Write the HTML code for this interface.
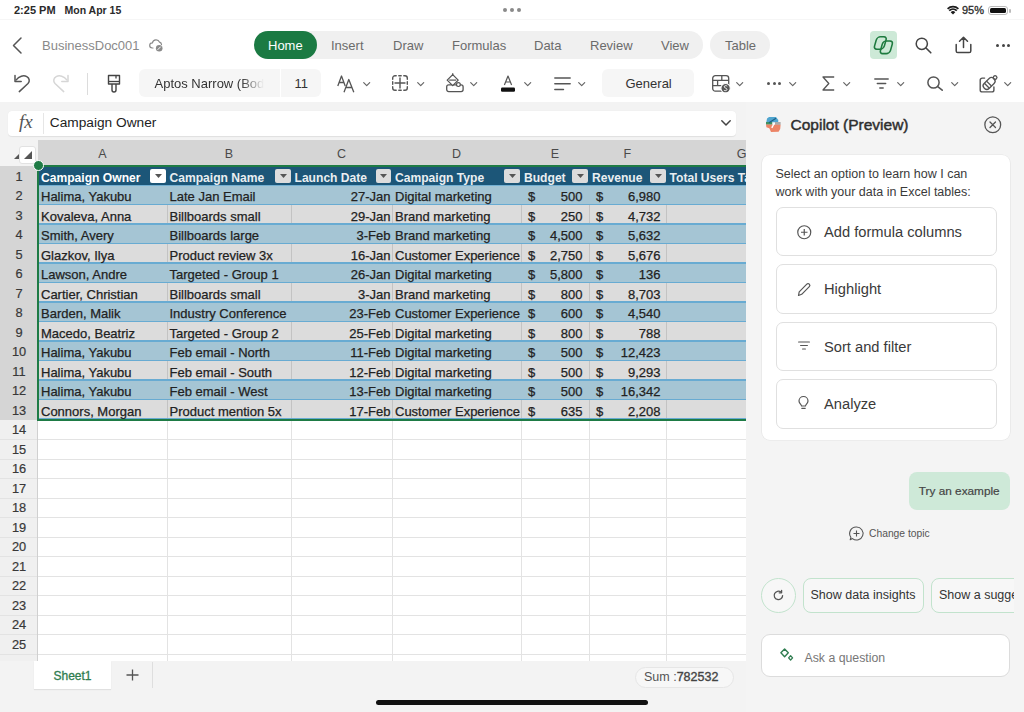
<!DOCTYPE html>
<html><head><meta charset="utf-8">
<style>
*{margin:0;padding:0;box-sizing:border-box}
html,body{width:1024px;height:712px;overflow:hidden;background:#fff;font-family:"Liberation Sans",sans-serif;color:#222}
.a{position:absolute}
.t{position:absolute;white-space:nowrap;line-height:1}
svg.i{position:absolute;overflow:visible}
.chev{position:absolute;width:7px;height:4px}
</style></head><body>

<div class="t" style="left:14px;top:5px;font-size:11px;font-weight:700;color:#2a2a2a;">2:25 PM</div>
<div class="t" style="left:64.5px;top:5.3px;font-size:10.5px;font-weight:700;color:#2a2a2a;">Mon Apr 15</div>
<div class="a" style="left:503px;top:8px;width:4px;height:4px;background:#8a8a8a;border-radius:2px"></div>
<div class="a" style="left:510px;top:8px;width:4px;height:4px;background:#8a8a8a;border-radius:2px"></div>
<div class="a" style="left:517px;top:8px;width:4px;height:4px;background:#8a8a8a;border-radius:2px"></div>
<svg class="i" style="left:947px;top:6px" width="12" height="9" viewBox="0 0 12 9"><path d="M6 8.6 L8.3 6.2 A3.3 3.3 0 0 0 3.7 6.2 Z" fill="#1c1c1c"/><path d="M2.2 4.6 A5.5 5.5 0 0 1 9.8 4.6" fill="none" stroke="#1c1c1c" stroke-width="1.7"/><path d="M0.6 2.8 A7.8 7.8 0 0 1 11.4 2.8" fill="none" stroke="#1c1c1c" stroke-width="1.7"/></svg>
<div class="t" style="left:962px;top:5px;font-size:11px;font-weight:400;color:#2a2a2a;-webkit-text-stroke:0.3px #2a2a2a">95%</div>
<div class="a" style="left:988px;top:6px;width:20px;height:9px;border:1px solid #bbb;border-radius:3px;padding:1px"><div style="width:100%;height:100%;background:#111;border-radius:1.5px"></div></div>
<div class="a" style="left:1009px;top:9px;width:1.5px;height:3.5px;background:#bbb;border-radius:1px"></div>
<div class="a" style="left:0px;top:19px;width:1024px;height:1px;background:#f6f6f6;"></div>
<svg class="i" style="left:12px;top:37px" width="10" height="17" viewBox="0 0 10 17"><path d="M9 1 L1.5 8.5 L9 16" fill="none" stroke="#555" stroke-width="1.5" stroke-linecap="round" stroke-linejoin="round"/></svg>
<div class="t" style="left:42px;top:39px;font-size:13px;font-weight:400;color:#8a8a8a;">BusinessDoc001</div>
<svg class="i" style="left:149px;top:38px" width="15" height="14" viewBox="0 0 15 14"><path d="M4 10 H3.2 A2.6 2.6 0 0 1 3.4 4.8 A3.8 3.8 0 0 1 10.6 4.2 A2.6 2.6 0 0 1 12.5 6.5" fill="none" stroke="#8a8a8a" stroke-width="1.2" stroke-linecap="round"/><circle cx="10.2" cy="10.2" r="3.3" fill="#8a8a8a"/><path d="M8.6 11.8 L11.8 8.6" stroke="#fff" stroke-width="1"/></svg>
<div class="a" style="left:254px;top:31px;width:449px;height:28px;background:#f0f0f0;border-radius:14px"></div>
<div class="a" style="left:254px;top:31px;width:63px;height:28px;background:#1b7a43;border-radius:14px"></div>
<div class="a" style="left:710px;top:31px;width:60px;height:28px;background:#f0f0f0;border-radius:14px"></div>
<div class="t" style="left:268px;top:39px;font-size:13px;font-weight:400;color:#ffffff;">Home</div>
<div class="t" style="left:331px;top:39px;font-size:13px;font-weight:400;color:#6b6b6b;">Insert</div>
<div class="t" style="left:393px;top:39px;font-size:13px;font-weight:400;color:#6b6b6b;">Draw</div>
<div class="t" style="left:452px;top:39px;font-size:13px;font-weight:400;color:#6b6b6b;">Formulas</div>
<div class="t" style="left:534px;top:39px;font-size:13px;font-weight:400;color:#6b6b6b;">Data</div>
<div class="t" style="left:590px;top:39px;font-size:13px;font-weight:400;color:#6b6b6b;">Review</div>
<div class="t" style="left:661px;top:39px;font-size:13px;font-weight:400;color:#6b6b6b;">View</div>
<div class="t" style="left:725px;top:39px;font-size:13px;font-weight:400;color:#6b6b6b;">Table</div>
<div class="a" style="left:869.8px;top:31.1px;width:27px;height:27.5px;background:#cde9d7;border-radius:4px"></div>
<svg class="i" style="left:873.6px;top:35.8px" width="20" height="19" viewBox="0 0 20 19"><g fill="none" stroke="#1d7a3e" stroke-width="1.6" transform="skewX(-16)"><rect x="3.4" y="0.8" width="9.8" height="12.4" rx="3.2"/><rect x="10.6" y="5" width="10" height="12.6" rx="3.2"/></g></svg>
<svg class="i" style="left:915px;top:37px" width="17" height="17" viewBox="0 0 17 17"><circle cx="6.8" cy="6.8" r="5.6" fill="none" stroke="#444" stroke-width="1.5"/><path d="M11 11 L15.8 15.8" stroke="#444" stroke-width="1.6" stroke-linecap="round"/></svg>
<svg class="i" style="left:955px;top:36px" width="17" height="18" viewBox="0 0 17 18"><path d="M8.5 11.5 V1.5 M4.5 5.2 L8.5 1.2 L12.5 5.2" fill="none" stroke="#444" stroke-width="1.5" stroke-linecap="round" stroke-linejoin="round"/><path d="M1.2 8.5 V15 A1.6 1.6 0 0 0 2.8 16.6 H14.2 A1.6 1.6 0 0 0 15.8 15 V8.5" fill="none" stroke="#444" stroke-width="1.5" stroke-linecap="round"/></svg>
<div class="a" style="left:996.0px;top:43.5px;width:3px;height:3px;background:#444;border-radius:50%"></div>
<div class="a" style="left:1001.5px;top:43.5px;width:3px;height:3px;background:#444;border-radius:50%"></div>
<div class="a" style="left:1007.0px;top:43.5px;width:3px;height:3px;background:#444;border-radius:50%"></div>
<svg class="i" style="left:13px;top:74px" width="18" height="19" viewBox="0 0 18 19"><path d="M3.2 5.9 C6 2.2 10.5 0.9 13.8 2.6 C16.6 4.2 17 7.3 15 9.5 L6.3 17.6" fill="none" stroke="#555" stroke-width="1.5" stroke-linecap="round" stroke-linejoin="round"/><path d="M2 1.6 V7.6 H8.2" fill="none" stroke="#555" stroke-width="1.5" stroke-linecap="round" stroke-linejoin="round"/></svg>
<svg class="i" style="left:52px;top:74px" width="18" height="19" viewBox="0 0 18 19"><g transform="translate(18 0) scale(-1 1)"><path d="M3.2 5.9 C6 2.2 10.5 0.9 13.8 2.6 C16.6 4.2 17 7.3 15 9.5 L6.3 17.6" fill="none" stroke="#d6d6d6" stroke-width="1.5" stroke-linecap="round" stroke-linejoin="round"/><path d="M2 1.6 V7.6 H8.2" fill="none" stroke="#d6d6d6" stroke-width="1.5" stroke-linecap="round" stroke-linejoin="round"/></g></svg>
<div class="a" style="left:87px;top:72.5px;width:1px;height:22px;background:#dcdcdc;"></div>
<svg class="i" style="left:107px;top:74px" width="14" height="18" viewBox="0 0 14 18"><path d="M1.5 1.5 H12.5 V10 H1.5 Z" fill="none" stroke="#444" stroke-width="1.4" stroke-linejoin="round"/><path d="M1.5 7.5 H12.5" stroke="#444" stroke-width="1.3"/><path d="M9 1.5 V4.5" stroke="#444" stroke-width="1.3"/><path d="M5 10 V16 A2 2 0 0 0 9 16 V10" fill="none" stroke="#444" stroke-width="1.4"/></svg>
<div class="a" style="left:139px;top:69px;width:141px;height:28px;background:#f6f6f6;border-radius:6px 0 0 6px"></div>
<div class="a" style="left:281px;top:69px;width:40px;height:28px;background:#f6f6f6;border-radius:0 6px 6px 0"></div>
<div class="a" style="left:150px;top:69px;width:114px;height:28px;overflow:hidden;-webkit-mask-image:linear-gradient(to right,#000 80%,transparent 100%)"><div class="t" style="left:4.5px;top:7.5px;font-size:13px;color:#333">Aptos Narrow (Body)</div></div>
<div class="t" style="left:294.5px;top:76.5px;font-size:13px;font-weight:400;color:#333;">11</div>
<svg class="i" style="left:337px;top:74.5px" width="20" height="18" viewBox="0 0 20 18"><g fill="none" stroke="#555" stroke-width="1.3" stroke-linejoin="round"><path d="M0.8 11 L4.5 1 L8.2 11 M2.2 7.5 H6.8"/><path d="M7 17.3 L11.8 4.5 L16.8 17.3 M8.8 12.5 H14.8"/></g></svg>
<svg class="i" style="left:362.8px;top:81.5px" width="8" height="5" viewBox="0 0 8 5"><path d="M0.7 0.7 L3.7 3.7 L6.7 0.7" fill="none" stroke="#666" stroke-width="1.2" stroke-linecap="round" stroke-linejoin="round"/></svg>
<svg class="i" style="left:392.3px;top:75.3px" width="16" height="16" viewBox="0 0 16 16"><g fill="none" stroke="#555" stroke-width="1.4" stroke-linecap="round"><path d="M0.7 4.2 V3 A2.3 2.3 0 0 1 3 0.7 H4.2 M11.8 0.7 H13 A2.3 2.3 0 0 1 15.3 3 V4.2 M15.3 11.8 V13 A2.3 2.3 0 0 1 13 15.3 H11.8 M4.2 15.3 H3 A2.3 2.3 0 0 1 0.7 13 V11.8 M6.8 0.7 H9.2 M6.8 15.3 H9.2 M0.7 6.8 V9.2 M15.3 6.8 V9.2"/><path d="M8 3 V13 M3 8 H13"/></g></svg>
<svg class="i" style="left:416.8px;top:81.5px" width="8" height="5" viewBox="0 0 8 5"><path d="M0.7 0.7 L3.7 3.7 L6.7 0.7" fill="none" stroke="#666" stroke-width="1.2" stroke-linecap="round" stroke-linejoin="round"/></svg>
<svg class="i" style="left:445.5px;top:73px" width="18" height="19" viewBox="0 0 18 19"><rect x="0.7" y="11.8" width="16.4" height="6.8" rx="2" fill="none" stroke="#555" stroke-width="1.3"/><path d="M6.7 1.6 L12.2 7.1 L6.7 12.6 L1.2 7.1 Z" fill="#fff" stroke="#555" stroke-width="1.3" stroke-linejoin="round"/><path d="M3.2 7.1 H10.2" stroke="#555" stroke-width="1.2"/><path d="M6.7 0.2 V3" stroke="#555" stroke-width="1.3"/><circle cx="12.4" cy="11.6" r="1.9" fill="#fff" stroke="#555" stroke-width="1.2"/></svg>
<svg class="i" style="left:469.8px;top:81.5px" width="8" height="5" viewBox="0 0 8 5"><path d="M0.7 0.7 L3.7 3.7 L6.7 0.7" fill="none" stroke="#666" stroke-width="1.2" stroke-linecap="round" stroke-linejoin="round"/></svg>
<svg class="i" style="left:501px;top:74.5px" width="14" height="17" viewBox="0 0 14 17"><path d="M3.4 10 L7 1 L10.6 10 M4.6 7 H9.4" fill="none" stroke="#555" stroke-width="1.2" stroke-linejoin="round"/><rect x="0" y="12.6" width="14" height="4.2" rx="1.2" fill="#111"/></svg>
<svg class="i" style="left:523.8px;top:81.5px" width="8" height="5" viewBox="0 0 8 5"><path d="M0.7 0.7 L3.7 3.7 L6.7 0.7" fill="none" stroke="#666" stroke-width="1.2" stroke-linecap="round" stroke-linejoin="round"/></svg>
<svg class="i" style="left:553.5px;top:76.5px" width="17" height="14" viewBox="0 0 17 14"><path d="M0.8 1 H16.2 M0.8 6.8 H16.2 M0.8 12.5 H9.5" fill="none" stroke="#555" stroke-width="1.4" stroke-linecap="round"/></svg>
<svg class="i" style="left:577.8px;top:81.5px" width="8" height="5" viewBox="0 0 8 5"><path d="M0.7 0.7 L3.7 3.7 L6.7 0.7" fill="none" stroke="#666" stroke-width="1.2" stroke-linecap="round" stroke-linejoin="round"/></svg>
<div class="a" style="left:602px;top:69px;width:92px;height:28px;background:#f6f6f6;border-radius:6px"></div>
<div class="t" style="left:625.5px;top:76.5px;font-size:13px;font-weight:400;color:#333;">General</div>
<svg class="i" style="left:711.5px;top:75px" width="20" height="19" viewBox="0 0 20 19"><g fill="none" stroke="#555" stroke-width="1.3"><rect x="0.7" y="0.7" width="16" height="15.4" rx="2.6"/><path d="M0.7 5.3 H16.7 M0.7 10.6 H11 M9.8 0.7 V5.3 M5.6 5.3 V10.6"/></g><circle cx="13.6" cy="13.2" r="4.7" fill="#555" stroke="#fff" stroke-width="1.1"/><path d="M15.2 11.2 C14.2 10.2 12 10.6 12.2 12 C12.4 13.2 15 13 15 14.4 C15 15.8 12.8 16 11.9 15.2" fill="none" stroke="#fff" stroke-width="0.9"/></svg>
<svg class="i" style="left:735.8px;top:81.5px" width="8" height="5" viewBox="0 0 8 5"><path d="M0.7 0.7 L3.7 3.7 L6.7 0.7" fill="none" stroke="#666" stroke-width="1.2" stroke-linecap="round" stroke-linejoin="round"/></svg>
<div class="a" style="left:767.0px;top:81.5px;width:3px;height:3px;background:#555;border-radius:50%"></div>
<div class="a" style="left:772.5px;top:81.5px;width:3px;height:3px;background:#555;border-radius:50%"></div>
<div class="a" style="left:778.0px;top:81.5px;width:3px;height:3px;background:#555;border-radius:50%"></div>
<svg class="i" style="left:788.8px;top:81.5px" width="8" height="5" viewBox="0 0 8 5"><path d="M0.7 0.7 L3.7 3.7 L6.7 0.7" fill="none" stroke="#666" stroke-width="1.2" stroke-linecap="round" stroke-linejoin="round"/></svg>
<svg class="i" style="left:821.5px;top:76px" width="13" height="15" viewBox="0 0 13 15"><path d="M12.2 1 H1 L6.8 7.5 L1 14 H12.2" fill="none" stroke="#555" stroke-width="1.3" stroke-linejoin="round"/></svg>
<svg class="i" style="left:842.8px;top:81.5px" width="8" height="5" viewBox="0 0 8 5"><path d="M0.7 0.7 L3.7 3.7 L6.7 0.7" fill="none" stroke="#666" stroke-width="1.2" stroke-linecap="round" stroke-linejoin="round"/></svg>
<svg class="i" style="left:873.5px;top:77.5px" width="15" height="11" viewBox="0 0 15 11"><path d="M0.8 1 H14.2 M3.3 5.5 H11.7 M5.8 10 H9.2" fill="none" stroke="#555" stroke-width="1.4" stroke-linecap="round"/></svg>
<svg class="i" style="left:896.8px;top:81.5px" width="8" height="5" viewBox="0 0 8 5"><path d="M0.7 0.7 L3.7 3.7 L6.7 0.7" fill="none" stroke="#666" stroke-width="1.2" stroke-linecap="round" stroke-linejoin="round"/></svg>
<svg class="i" style="left:926.5px;top:76px" width="17" height="15" viewBox="0 0 17 15"><circle cx="6.5" cy="6.5" r="5.6" fill="none" stroke="#555" stroke-width="1.5"/><path d="M10.7 10.7 L15.2 14.2" stroke="#555" stroke-width="1.6" stroke-linecap="round"/></svg>
<svg class="i" style="left:950.8px;top:81.5px" width="8" height="5" viewBox="0 0 8 5"><path d="M0.7 0.7 L3.7 3.7 L6.7 0.7" fill="none" stroke="#666" stroke-width="1.2" stroke-linecap="round" stroke-linejoin="round"/></svg>
<svg class="i" style="left:979px;top:74px" width="20" height="19" viewBox="0 0 20 19"><path d="M5.6 4.1 H3.2 A2 2 0 0 0 1.2 6.1 V15.9 A2 2 0 0 0 3.2 17.9 H12.9 A2 2 0 0 0 14.9 15.9 V13" fill="none" stroke="#555" stroke-width="1.4" stroke-linecap="round"/><g transform="rotate(-45 11 8.6)" fill="none" stroke="#555" stroke-width="1.3"><rect x="3" y="5.1" width="13.5" height="7" rx="3.2"/><path d="M6.6 5.1 V12.1 M9.6 5.1 V12.1"/><circle cx="18.2" cy="8.6" r="1.8"/></g></svg>
<svg class="i" style="left:1004.3px;top:81.5px" width="8" height="5" viewBox="0 0 8 5"><path d="M0.7 0.7 L3.7 3.7 L6.7 0.7" fill="none" stroke="#666" stroke-width="1.2" stroke-linecap="round" stroke-linejoin="round"/></svg>
<div class="a" style="left:0px;top:101.5px;width:1024px;height:1px;background:#e6e6e6;"></div>
<div class="a" style="left:0px;top:102px;width:1024px;height:610px;background:#f3f3f3;"></div>
<div class="a" style="left:8px;top:111px;width:728px;height:25px;background:#ffffff;border-radius:4px;box-shadow:0 0.5px 1px rgba(0,0,0,0.08)"></div>
<div class="a" style="left:43px;top:113px;width:1px;height:21px;background:#e6e6e6;"></div>
<div class="t" style="left:19px;top:111.5px;font-size:19px;font-weight:400;color:#555;font-family:'Liberation Serif',serif"><i>fx</i></div>
<div class="t" style="left:49.8px;top:115.8px;font-size:13.7px;font-weight:400;color:#222;">Campaign Owner</div>
<svg class="i" style="left:720.5px;top:119.5px" width="10" height="6" viewBox="0 0 10 6"><path d="M0.8 0.8 L5 5 L9.2 0.8" fill="none" stroke="#444" stroke-width="1.5" stroke-linecap="round" stroke-linejoin="round"/></svg>
<div class="a" style="left:38px;top:140px;width:708.3px;height:26px;background:#d5d5d5;"></div>
<div class="t" style="left:82.3px;width:40px;text-align:center;top:148px;font-size:12.5px;color:#4a4a4a">A</div>
<div class="t" style="left:208.95px;width:40px;text-align:center;top:148px;font-size:12.5px;color:#4a4a4a">B</div>
<div class="t" style="left:321.55px;width:40px;text-align:center;top:148px;font-size:12.5px;color:#4a4a4a">C</div>
<div class="t" style="left:436.45000000000005px;width:40px;text-align:center;top:148px;font-size:12.5px;color:#4a4a4a">D</div>
<div class="t" style="left:534.95px;width:40px;text-align:center;top:148px;font-size:12.5px;color:#4a4a4a">E</div>
<div class="t" style="left:607.4px;width:40px;text-align:center;top:148px;font-size:12.5px;color:#4a4a4a">F</div>
<div class="t" style="left:721.5px;width:40px;text-align:center;top:148px;font-size:12.5px;color:#4a4a4a">G</div>
<div class="a" style="left:0px;top:166px;width:38px;height:495px;background:#f0f0f0;"></div>
<div class="a" style="left:0px;top:166px;width:38px;height:253.5px;background:#d5d5d5;"></div>
<div class="a" style="left:38px;top:419.5px;width:708.3px;height:241.5px;background:#ffffff;"></div>
<div class="a" style="left:0px;top:439.4px;width:746.3px;height:1px;background:#e3e3e3;"></div>
<div class="a" style="left:0px;top:458.9px;width:746.3px;height:1px;background:#e3e3e3;"></div>
<div class="a" style="left:0px;top:478.4px;width:746.3px;height:1px;background:#e3e3e3;"></div>
<div class="a" style="left:0px;top:497.9px;width:746.3px;height:1px;background:#e3e3e3;"></div>
<div class="a" style="left:0px;top:517.4px;width:746.3px;height:1px;background:#e3e3e3;"></div>
<div class="a" style="left:0px;top:536.9px;width:746.3px;height:1px;background:#e3e3e3;"></div>
<div class="a" style="left:0px;top:556.4px;width:746.3px;height:1px;background:#e3e3e3;"></div>
<div class="a" style="left:0px;top:575.9px;width:746.3px;height:1px;background:#e3e3e3;"></div>
<div class="a" style="left:0px;top:595.4px;width:746.3px;height:1px;background:#e3e3e3;"></div>
<div class="a" style="left:0px;top:614.9px;width:746.3px;height:1px;background:#e3e3e3;"></div>
<div class="a" style="left:0px;top:634.4px;width:746.3px;height:1px;background:#e3e3e3;"></div>
<div class="a" style="left:0px;top:653.9px;width:746.3px;height:1px;background:#e3e3e3;"></div>
<div class="a" style="left:166.6px;top:419.5px;width:1px;height:241.5px;background:#e3e3e3;"></div>
<div class="a" style="left:291.3px;top:419.5px;width:1px;height:241.5px;background:#e3e3e3;"></div>
<div class="a" style="left:391.8px;top:419.5px;width:1px;height:241.5px;background:#e3e3e3;"></div>
<div class="a" style="left:521.1px;top:419.5px;width:1px;height:241.5px;background:#e3e3e3;"></div>
<div class="a" style="left:588.8px;top:419.5px;width:1px;height:241.5px;background:#e3e3e3;"></div>
<div class="a" style="left:666px;top:419.5px;width:1px;height:241.5px;background:#e3e3e3;"></div>
<div class="a" style="left:37px;top:166px;width:1px;height:495px;background:#d0d0d0;"></div>
<div class="t" style="left:0;width:38px;text-align:center;top:170.9px;font-size:12.8px;color:#383838;-webkit-text-stroke:0.2px #383838">1</div>
<div class="t" style="left:0;width:38px;text-align:center;top:190.4px;font-size:12.8px;color:#383838;-webkit-text-stroke:0.2px #383838">2</div>
<div class="t" style="left:0;width:38px;text-align:center;top:209.9px;font-size:12.8px;color:#383838;-webkit-text-stroke:0.2px #383838">3</div>
<div class="t" style="left:0;width:38px;text-align:center;top:229.4px;font-size:12.8px;color:#383838;-webkit-text-stroke:0.2px #383838">4</div>
<div class="t" style="left:0;width:38px;text-align:center;top:248.9px;font-size:12.8px;color:#383838;-webkit-text-stroke:0.2px #383838">5</div>
<div class="t" style="left:0;width:38px;text-align:center;top:268.4px;font-size:12.8px;color:#383838;-webkit-text-stroke:0.2px #383838">6</div>
<div class="t" style="left:0;width:38px;text-align:center;top:287.9px;font-size:12.8px;color:#383838;-webkit-text-stroke:0.2px #383838">7</div>
<div class="t" style="left:0;width:38px;text-align:center;top:307.4px;font-size:12.8px;color:#383838;-webkit-text-stroke:0.2px #383838">8</div>
<div class="t" style="left:0;width:38px;text-align:center;top:326.9px;font-size:12.8px;color:#383838;-webkit-text-stroke:0.2px #383838">9</div>
<div class="t" style="left:0;width:38px;text-align:center;top:346.4px;font-size:12.8px;color:#383838;-webkit-text-stroke:0.2px #383838">10</div>
<div class="t" style="left:0;width:38px;text-align:center;top:365.9px;font-size:12.8px;color:#383838;-webkit-text-stroke:0.2px #383838">11</div>
<div class="t" style="left:0;width:38px;text-align:center;top:385.4px;font-size:12.8px;color:#383838;-webkit-text-stroke:0.2px #383838">12</div>
<div class="t" style="left:0;width:38px;text-align:center;top:404.9px;font-size:12.8px;color:#383838;-webkit-text-stroke:0.2px #383838">13</div>
<div class="t" style="left:0;width:38px;text-align:center;top:424.4px;font-size:12.8px;color:#383838;-webkit-text-stroke:0.2px #383838">14</div>
<div class="t" style="left:0;width:38px;text-align:center;top:443.9px;font-size:12.8px;color:#383838;-webkit-text-stroke:0.2px #383838">15</div>
<div class="t" style="left:0;width:38px;text-align:center;top:463.4px;font-size:12.8px;color:#383838;-webkit-text-stroke:0.2px #383838">16</div>
<div class="t" style="left:0;width:38px;text-align:center;top:482.9px;font-size:12.8px;color:#383838;-webkit-text-stroke:0.2px #383838">17</div>
<div class="t" style="left:0;width:38px;text-align:center;top:502.4px;font-size:12.8px;color:#383838;-webkit-text-stroke:0.2px #383838">18</div>
<div class="t" style="left:0;width:38px;text-align:center;top:521.9px;font-size:12.8px;color:#383838;-webkit-text-stroke:0.2px #383838">19</div>
<div class="t" style="left:0;width:38px;text-align:center;top:541.4px;font-size:12.8px;color:#383838;-webkit-text-stroke:0.2px #383838">20</div>
<div class="t" style="left:0;width:38px;text-align:center;top:560.9px;font-size:12.8px;color:#383838;-webkit-text-stroke:0.2px #383838">21</div>
<div class="t" style="left:0;width:38px;text-align:center;top:580.4px;font-size:12.8px;color:#383838;-webkit-text-stroke:0.2px #383838">22</div>
<div class="t" style="left:0;width:38px;text-align:center;top:599.9px;font-size:12.8px;color:#383838;-webkit-text-stroke:0.2px #383838">23</div>
<div class="t" style="left:0;width:38px;text-align:center;top:619.4px;font-size:12.8px;color:#383838;-webkit-text-stroke:0.2px #383838">24</div>
<div class="t" style="left:0;width:38px;text-align:center;top:638.9px;font-size:12.8px;color:#383838;-webkit-text-stroke:0.2px #383838">25</div>
<div class="a" style="left:38px;top:166.0px;width:708.3px;height:19.5px;background:#e9eef0;"></div>
<div class="a" style="left:38px;top:166.9px;width:708.3px;height:18.6px;background:#1c5678;"></div>
<div class="a" style="left:38px;top:185.5px;width:708.3px;height:19.5px;background:#a5c5d4;"></div>
<div class="a" style="left:38px;top:205.0px;width:708.3px;height:19.5px;background:#dcdcdc;"></div>
<div class="a" style="left:166.6px;top:205.0px;width:1px;height:19.5px;background:#c3c3c3;"></div>
<div class="a" style="left:291.3px;top:205.0px;width:1px;height:19.5px;background:#c3c3c3;"></div>
<div class="a" style="left:391.8px;top:205.0px;width:1px;height:19.5px;background:#c3c3c3;"></div>
<div class="a" style="left:521.1px;top:205.0px;width:1px;height:19.5px;background:#c3c3c3;"></div>
<div class="a" style="left:588.8px;top:205.0px;width:1px;height:19.5px;background:#c3c3c3;"></div>
<div class="a" style="left:666px;top:205.0px;width:1px;height:19.5px;background:#c3c3c3;"></div>
<div class="a" style="left:38px;top:224.5px;width:708.3px;height:19.5px;background:#a5c5d4;"></div>
<div class="a" style="left:38px;top:244.0px;width:708.3px;height:19.5px;background:#dcdcdc;"></div>
<div class="a" style="left:166.6px;top:244.0px;width:1px;height:19.5px;background:#c3c3c3;"></div>
<div class="a" style="left:291.3px;top:244.0px;width:1px;height:19.5px;background:#c3c3c3;"></div>
<div class="a" style="left:391.8px;top:244.0px;width:1px;height:19.5px;background:#c3c3c3;"></div>
<div class="a" style="left:521.1px;top:244.0px;width:1px;height:19.5px;background:#c3c3c3;"></div>
<div class="a" style="left:588.8px;top:244.0px;width:1px;height:19.5px;background:#c3c3c3;"></div>
<div class="a" style="left:666px;top:244.0px;width:1px;height:19.5px;background:#c3c3c3;"></div>
<div class="a" style="left:38px;top:263.5px;width:708.3px;height:19.5px;background:#a5c5d4;"></div>
<div class="a" style="left:38px;top:283.0px;width:708.3px;height:19.5px;background:#dcdcdc;"></div>
<div class="a" style="left:166.6px;top:283.0px;width:1px;height:19.5px;background:#c3c3c3;"></div>
<div class="a" style="left:291.3px;top:283.0px;width:1px;height:19.5px;background:#c3c3c3;"></div>
<div class="a" style="left:391.8px;top:283.0px;width:1px;height:19.5px;background:#c3c3c3;"></div>
<div class="a" style="left:521.1px;top:283.0px;width:1px;height:19.5px;background:#c3c3c3;"></div>
<div class="a" style="left:588.8px;top:283.0px;width:1px;height:19.5px;background:#c3c3c3;"></div>
<div class="a" style="left:666px;top:283.0px;width:1px;height:19.5px;background:#c3c3c3;"></div>
<div class="a" style="left:38px;top:302.5px;width:708.3px;height:19.5px;background:#a5c5d4;"></div>
<div class="a" style="left:38px;top:322.0px;width:708.3px;height:19.5px;background:#dcdcdc;"></div>
<div class="a" style="left:166.6px;top:322.0px;width:1px;height:19.5px;background:#c3c3c3;"></div>
<div class="a" style="left:291.3px;top:322.0px;width:1px;height:19.5px;background:#c3c3c3;"></div>
<div class="a" style="left:391.8px;top:322.0px;width:1px;height:19.5px;background:#c3c3c3;"></div>
<div class="a" style="left:521.1px;top:322.0px;width:1px;height:19.5px;background:#c3c3c3;"></div>
<div class="a" style="left:588.8px;top:322.0px;width:1px;height:19.5px;background:#c3c3c3;"></div>
<div class="a" style="left:666px;top:322.0px;width:1px;height:19.5px;background:#c3c3c3;"></div>
<div class="a" style="left:38px;top:341.5px;width:708.3px;height:19.5px;background:#a5c5d4;"></div>
<div class="a" style="left:38px;top:361.0px;width:708.3px;height:19.5px;background:#dcdcdc;"></div>
<div class="a" style="left:166.6px;top:361.0px;width:1px;height:19.5px;background:#c3c3c3;"></div>
<div class="a" style="left:291.3px;top:361.0px;width:1px;height:19.5px;background:#c3c3c3;"></div>
<div class="a" style="left:391.8px;top:361.0px;width:1px;height:19.5px;background:#c3c3c3;"></div>
<div class="a" style="left:521.1px;top:361.0px;width:1px;height:19.5px;background:#c3c3c3;"></div>
<div class="a" style="left:588.8px;top:361.0px;width:1px;height:19.5px;background:#c3c3c3;"></div>
<div class="a" style="left:666px;top:361.0px;width:1px;height:19.5px;background:#c3c3c3;"></div>
<div class="a" style="left:38px;top:380.5px;width:708.3px;height:19.5px;background:#a5c5d4;"></div>
<div class="a" style="left:38px;top:400.0px;width:708.3px;height:19.5px;background:#dcdcdc;"></div>
<div class="a" style="left:166.6px;top:400.0px;width:1px;height:19.5px;background:#c3c3c3;"></div>
<div class="a" style="left:291.3px;top:400.0px;width:1px;height:19.5px;background:#c3c3c3;"></div>
<div class="a" style="left:391.8px;top:400.0px;width:1px;height:19.5px;background:#c3c3c3;"></div>
<div class="a" style="left:521.1px;top:400.0px;width:1px;height:19.5px;background:#c3c3c3;"></div>
<div class="a" style="left:588.8px;top:400.0px;width:1px;height:19.5px;background:#c3c3c3;"></div>
<div class="a" style="left:666px;top:400.0px;width:1px;height:19.5px;background:#c3c3c3;"></div>
<div class="a" style="left:38px;top:184.9px;width:708.3px;height:1.4px;background:#74b0d2;"></div>
<div class="a" style="left:38px;top:203.7px;width:708.3px;height:1.8px;background:#68abd2;"></div>
<div class="a" style="left:38px;top:223.2px;width:708.3px;height:1.8px;background:#68abd2;"></div>
<div class="a" style="left:38px;top:242.7px;width:708.3px;height:1.8px;background:#68abd2;"></div>
<div class="a" style="left:38px;top:262.2px;width:708.3px;height:1.8px;background:#68abd2;"></div>
<div class="a" style="left:38px;top:281.7px;width:708.3px;height:1.8px;background:#68abd2;"></div>
<div class="a" style="left:38px;top:301.2px;width:708.3px;height:1.8px;background:#68abd2;"></div>
<div class="a" style="left:38px;top:320.7px;width:708.3px;height:1.8px;background:#68abd2;"></div>
<div class="a" style="left:38px;top:340.2px;width:708.3px;height:1.8px;background:#68abd2;"></div>
<div class="a" style="left:38px;top:359.7px;width:708.3px;height:1.8px;background:#68abd2;"></div>
<div class="a" style="left:38px;top:379.2px;width:708.3px;height:1.8px;background:#68abd2;"></div>
<div class="a" style="left:38px;top:398.7px;width:708.3px;height:1.8px;background:#68abd2;"></div>
<div class="a" style="left:38px;top:418.2px;width:708.3px;height:1.8px;background:#68abd2;"></div>
<div class="t" style="left:41px;top:190.4px;font-size:13px;font-weight:400;color:#222;-webkit-text-stroke:0.25px #222">Halima, Yakubu</div>
<div class="t" style="left:169.5px;top:190.4px;font-size:13px;font-weight:400;color:#222;-webkit-text-stroke:0.25px #222">Late Jan Email</div>
<div class="t" style="left:291.3px;width:99.19999999999999px;text-align:right;top:190.4px;font-size:13px;color:#222;-webkit-text-stroke:0.25px #222">27-Jan</div>
<div class="t" style="left:395px;top:190.4px;font-size:13px;font-weight:400;color:#222;-webkit-text-stroke:0.25px #222">Digital marketing</div>
<div class="t" style="left:528px;top:190.4px;font-size:13px;font-weight:400;color:#222;-webkit-text-stroke:0.25px #222">$</div>
<div class="t" style="left:521.1px;width:61.39999999999998px;text-align:right;top:190.4px;font-size:13px;color:#222;-webkit-text-stroke:0.25px #222">500</div>
<div class="t" style="left:596px;top:190.4px;font-size:13px;font-weight:400;color:#222;-webkit-text-stroke:0.25px #222">$</div>
<div class="t" style="left:588.8px;width:71.70000000000005px;text-align:right;top:190.4px;font-size:13px;color:#222;-webkit-text-stroke:0.25px #222">6,980</div>
<div class="t" style="left:41px;top:209.9px;font-size:13px;font-weight:400;color:#222;-webkit-text-stroke:0.25px #222">Kovaleva, Anna</div>
<div class="t" style="left:169.5px;top:209.9px;font-size:13px;font-weight:400;color:#222;-webkit-text-stroke:0.25px #222">Billboards small</div>
<div class="t" style="left:291.3px;width:99.19999999999999px;text-align:right;top:209.9px;font-size:13px;color:#222;-webkit-text-stroke:0.25px #222">29-Jan</div>
<div class="t" style="left:395px;top:209.9px;font-size:13px;font-weight:400;color:#222;-webkit-text-stroke:0.25px #222">Brand marketing</div>
<div class="t" style="left:528px;top:209.9px;font-size:13px;font-weight:400;color:#222;-webkit-text-stroke:0.25px #222">$</div>
<div class="t" style="left:521.1px;width:61.39999999999998px;text-align:right;top:209.9px;font-size:13px;color:#222;-webkit-text-stroke:0.25px #222">250</div>
<div class="t" style="left:596px;top:209.9px;font-size:13px;font-weight:400;color:#222;-webkit-text-stroke:0.25px #222">$</div>
<div class="t" style="left:588.8px;width:71.70000000000005px;text-align:right;top:209.9px;font-size:13px;color:#222;-webkit-text-stroke:0.25px #222">4,732</div>
<div class="t" style="left:41px;top:229.4px;font-size:13px;font-weight:400;color:#222;-webkit-text-stroke:0.25px #222">Smith, Avery</div>
<div class="t" style="left:169.5px;top:229.4px;font-size:13px;font-weight:400;color:#222;-webkit-text-stroke:0.25px #222">Billboards large</div>
<div class="t" style="left:291.3px;width:99.19999999999999px;text-align:right;top:229.4px;font-size:13px;color:#222;-webkit-text-stroke:0.25px #222">3-Feb</div>
<div class="t" style="left:395px;top:229.4px;font-size:13px;font-weight:400;color:#222;-webkit-text-stroke:0.25px #222">Brand marketing</div>
<div class="t" style="left:528px;top:229.4px;font-size:13px;font-weight:400;color:#222;-webkit-text-stroke:0.25px #222">$</div>
<div class="t" style="left:521.1px;width:61.39999999999998px;text-align:right;top:229.4px;font-size:13px;color:#222;-webkit-text-stroke:0.25px #222">4,500</div>
<div class="t" style="left:596px;top:229.4px;font-size:13px;font-weight:400;color:#222;-webkit-text-stroke:0.25px #222">$</div>
<div class="t" style="left:588.8px;width:71.70000000000005px;text-align:right;top:229.4px;font-size:13px;color:#222;-webkit-text-stroke:0.25px #222">5,632</div>
<div class="t" style="left:41px;top:248.9px;font-size:13px;font-weight:400;color:#222;-webkit-text-stroke:0.25px #222">Glazkov, Ilya</div>
<div class="t" style="left:169.5px;top:248.9px;font-size:13px;font-weight:400;color:#222;-webkit-text-stroke:0.25px #222">Product review 3x</div>
<div class="t" style="left:291.3px;width:99.19999999999999px;text-align:right;top:248.9px;font-size:13px;color:#222;-webkit-text-stroke:0.25px #222">16-Jan</div>
<div class="t" style="left:395px;top:248.9px;font-size:13px;font-weight:400;color:#222;-webkit-text-stroke:0.25px #222">Customer Experience</div>
<div class="t" style="left:528px;top:248.9px;font-size:13px;font-weight:400;color:#222;-webkit-text-stroke:0.25px #222">$</div>
<div class="t" style="left:521.1px;width:61.39999999999998px;text-align:right;top:248.9px;font-size:13px;color:#222;-webkit-text-stroke:0.25px #222">2,750</div>
<div class="t" style="left:596px;top:248.9px;font-size:13px;font-weight:400;color:#222;-webkit-text-stroke:0.25px #222">$</div>
<div class="t" style="left:588.8px;width:71.70000000000005px;text-align:right;top:248.9px;font-size:13px;color:#222;-webkit-text-stroke:0.25px #222">5,676</div>
<div class="t" style="left:41px;top:268.4px;font-size:13px;font-weight:400;color:#222;-webkit-text-stroke:0.25px #222">Lawson, Andre</div>
<div class="t" style="left:169.5px;top:268.4px;font-size:13px;font-weight:400;color:#222;-webkit-text-stroke:0.25px #222">Targeted - Group 1</div>
<div class="t" style="left:291.3px;width:99.19999999999999px;text-align:right;top:268.4px;font-size:13px;color:#222;-webkit-text-stroke:0.25px #222">26-Jan</div>
<div class="t" style="left:395px;top:268.4px;font-size:13px;font-weight:400;color:#222;-webkit-text-stroke:0.25px #222">Digital marketing</div>
<div class="t" style="left:528px;top:268.4px;font-size:13px;font-weight:400;color:#222;-webkit-text-stroke:0.25px #222">$</div>
<div class="t" style="left:521.1px;width:61.39999999999998px;text-align:right;top:268.4px;font-size:13px;color:#222;-webkit-text-stroke:0.25px #222">5,800</div>
<div class="t" style="left:596px;top:268.4px;font-size:13px;font-weight:400;color:#222;-webkit-text-stroke:0.25px #222">$</div>
<div class="t" style="left:588.8px;width:71.70000000000005px;text-align:right;top:268.4px;font-size:13px;color:#222;-webkit-text-stroke:0.25px #222">136</div>
<div class="t" style="left:41px;top:287.9px;font-size:13px;font-weight:400;color:#222;-webkit-text-stroke:0.25px #222">Cartier, Christian</div>
<div class="t" style="left:169.5px;top:287.9px;font-size:13px;font-weight:400;color:#222;-webkit-text-stroke:0.25px #222">Billboards small</div>
<div class="t" style="left:291.3px;width:99.19999999999999px;text-align:right;top:287.9px;font-size:13px;color:#222;-webkit-text-stroke:0.25px #222">3-Jan</div>
<div class="t" style="left:395px;top:287.9px;font-size:13px;font-weight:400;color:#222;-webkit-text-stroke:0.25px #222">Brand marketing</div>
<div class="t" style="left:528px;top:287.9px;font-size:13px;font-weight:400;color:#222;-webkit-text-stroke:0.25px #222">$</div>
<div class="t" style="left:521.1px;width:61.39999999999998px;text-align:right;top:287.9px;font-size:13px;color:#222;-webkit-text-stroke:0.25px #222">800</div>
<div class="t" style="left:596px;top:287.9px;font-size:13px;font-weight:400;color:#222;-webkit-text-stroke:0.25px #222">$</div>
<div class="t" style="left:588.8px;width:71.70000000000005px;text-align:right;top:287.9px;font-size:13px;color:#222;-webkit-text-stroke:0.25px #222">8,703</div>
<div class="t" style="left:41px;top:307.4px;font-size:13px;font-weight:400;color:#222;-webkit-text-stroke:0.25px #222">Barden, Malik</div>
<div class="t" style="left:169.5px;top:307.4px;font-size:13px;font-weight:400;color:#222;-webkit-text-stroke:0.25px #222">Industry Conference</div>
<div class="t" style="left:291.3px;width:99.19999999999999px;text-align:right;top:307.4px;font-size:13px;color:#222;-webkit-text-stroke:0.25px #222">23-Feb</div>
<div class="t" style="left:395px;top:307.4px;font-size:13px;font-weight:400;color:#222;-webkit-text-stroke:0.25px #222">Customer Experience</div>
<div class="t" style="left:528px;top:307.4px;font-size:13px;font-weight:400;color:#222;-webkit-text-stroke:0.25px #222">$</div>
<div class="t" style="left:521.1px;width:61.39999999999998px;text-align:right;top:307.4px;font-size:13px;color:#222;-webkit-text-stroke:0.25px #222">600</div>
<div class="t" style="left:596px;top:307.4px;font-size:13px;font-weight:400;color:#222;-webkit-text-stroke:0.25px #222">$</div>
<div class="t" style="left:588.8px;width:71.70000000000005px;text-align:right;top:307.4px;font-size:13px;color:#222;-webkit-text-stroke:0.25px #222">4,540</div>
<div class="t" style="left:41px;top:326.9px;font-size:13px;font-weight:400;color:#222;-webkit-text-stroke:0.25px #222">Macedo, Beatriz</div>
<div class="t" style="left:169.5px;top:326.9px;font-size:13px;font-weight:400;color:#222;-webkit-text-stroke:0.25px #222">Targeted - Group 2</div>
<div class="t" style="left:291.3px;width:99.19999999999999px;text-align:right;top:326.9px;font-size:13px;color:#222;-webkit-text-stroke:0.25px #222">25-Feb</div>
<div class="t" style="left:395px;top:326.9px;font-size:13px;font-weight:400;color:#222;-webkit-text-stroke:0.25px #222">Digital marketing</div>
<div class="t" style="left:528px;top:326.9px;font-size:13px;font-weight:400;color:#222;-webkit-text-stroke:0.25px #222">$</div>
<div class="t" style="left:521.1px;width:61.39999999999998px;text-align:right;top:326.9px;font-size:13px;color:#222;-webkit-text-stroke:0.25px #222">800</div>
<div class="t" style="left:596px;top:326.9px;font-size:13px;font-weight:400;color:#222;-webkit-text-stroke:0.25px #222">$</div>
<div class="t" style="left:588.8px;width:71.70000000000005px;text-align:right;top:326.9px;font-size:13px;color:#222;-webkit-text-stroke:0.25px #222">788</div>
<div class="t" style="left:41px;top:346.4px;font-size:13px;font-weight:400;color:#222;-webkit-text-stroke:0.25px #222">Halima, Yakubu</div>
<div class="t" style="left:169.5px;top:346.4px;font-size:13px;font-weight:400;color:#222;-webkit-text-stroke:0.25px #222">Feb email - North</div>
<div class="t" style="left:291.3px;width:99.19999999999999px;text-align:right;top:346.4px;font-size:13px;color:#222;-webkit-text-stroke:0.25px #222">11-Feb</div>
<div class="t" style="left:395px;top:346.4px;font-size:13px;font-weight:400;color:#222;-webkit-text-stroke:0.25px #222">Digital marketing</div>
<div class="t" style="left:528px;top:346.4px;font-size:13px;font-weight:400;color:#222;-webkit-text-stroke:0.25px #222">$</div>
<div class="t" style="left:521.1px;width:61.39999999999998px;text-align:right;top:346.4px;font-size:13px;color:#222;-webkit-text-stroke:0.25px #222">500</div>
<div class="t" style="left:596px;top:346.4px;font-size:13px;font-weight:400;color:#222;-webkit-text-stroke:0.25px #222">$</div>
<div class="t" style="left:588.8px;width:71.70000000000005px;text-align:right;top:346.4px;font-size:13px;color:#222;-webkit-text-stroke:0.25px #222">12,423</div>
<div class="t" style="left:41px;top:365.9px;font-size:13px;font-weight:400;color:#222;-webkit-text-stroke:0.25px #222">Halima, Yakubu</div>
<div class="t" style="left:169.5px;top:365.9px;font-size:13px;font-weight:400;color:#222;-webkit-text-stroke:0.25px #222">Feb email - South</div>
<div class="t" style="left:291.3px;width:99.19999999999999px;text-align:right;top:365.9px;font-size:13px;color:#222;-webkit-text-stroke:0.25px #222">12-Feb</div>
<div class="t" style="left:395px;top:365.9px;font-size:13px;font-weight:400;color:#222;-webkit-text-stroke:0.25px #222">Digital marketing</div>
<div class="t" style="left:528px;top:365.9px;font-size:13px;font-weight:400;color:#222;-webkit-text-stroke:0.25px #222">$</div>
<div class="t" style="left:521.1px;width:61.39999999999998px;text-align:right;top:365.9px;font-size:13px;color:#222;-webkit-text-stroke:0.25px #222">500</div>
<div class="t" style="left:596px;top:365.9px;font-size:13px;font-weight:400;color:#222;-webkit-text-stroke:0.25px #222">$</div>
<div class="t" style="left:588.8px;width:71.70000000000005px;text-align:right;top:365.9px;font-size:13px;color:#222;-webkit-text-stroke:0.25px #222">9,293</div>
<div class="t" style="left:41px;top:385.4px;font-size:13px;font-weight:400;color:#222;-webkit-text-stroke:0.25px #222">Halima, Yakubu</div>
<div class="t" style="left:169.5px;top:385.4px;font-size:13px;font-weight:400;color:#222;-webkit-text-stroke:0.25px #222">Feb email - West</div>
<div class="t" style="left:291.3px;width:99.19999999999999px;text-align:right;top:385.4px;font-size:13px;color:#222;-webkit-text-stroke:0.25px #222">13-Feb</div>
<div class="t" style="left:395px;top:385.4px;font-size:13px;font-weight:400;color:#222;-webkit-text-stroke:0.25px #222">Digital marketing</div>
<div class="t" style="left:528px;top:385.4px;font-size:13px;font-weight:400;color:#222;-webkit-text-stroke:0.25px #222">$</div>
<div class="t" style="left:521.1px;width:61.39999999999998px;text-align:right;top:385.4px;font-size:13px;color:#222;-webkit-text-stroke:0.25px #222">500</div>
<div class="t" style="left:596px;top:385.4px;font-size:13px;font-weight:400;color:#222;-webkit-text-stroke:0.25px #222">$</div>
<div class="t" style="left:588.8px;width:71.70000000000005px;text-align:right;top:385.4px;font-size:13px;color:#222;-webkit-text-stroke:0.25px #222">16,342</div>
<div class="t" style="left:41px;top:404.9px;font-size:13px;font-weight:400;color:#222;-webkit-text-stroke:0.25px #222">Connors, Morgan</div>
<div class="t" style="left:169.5px;top:404.9px;font-size:13px;font-weight:400;color:#222;-webkit-text-stroke:0.25px #222">Product mention 5x</div>
<div class="t" style="left:291.3px;width:99.19999999999999px;text-align:right;top:404.9px;font-size:13px;color:#222;-webkit-text-stroke:0.25px #222">17-Feb</div>
<div class="t" style="left:395px;top:404.9px;font-size:13px;font-weight:400;color:#222;-webkit-text-stroke:0.25px #222">Customer Experience</div>
<div class="t" style="left:528px;top:404.9px;font-size:13px;font-weight:400;color:#222;-webkit-text-stroke:0.25px #222">$</div>
<div class="t" style="left:521.1px;width:61.39999999999998px;text-align:right;top:404.9px;font-size:13px;color:#222;-webkit-text-stroke:0.25px #222">635</div>
<div class="t" style="left:596px;top:404.9px;font-size:13px;font-weight:400;color:#222;-webkit-text-stroke:0.25px #222">$</div>
<div class="t" style="left:588.8px;width:71.70000000000005px;text-align:right;top:404.9px;font-size:13px;color:#222;-webkit-text-stroke:0.25px #222">2,208</div>
<div class="t" style="left:41px;top:171.6px;font-size:12.1px;font-weight:700;color:#ffffff;">Campaign Owner</div>
<div class="t" style="left:169.5px;top:171.6px;font-size:12.1px;font-weight:700;color:#e9eef1;">Campaign Name</div>
<div class="t" style="left:294.5px;top:171.6px;font-size:12.1px;font-weight:700;color:#e9eef1;">Launch Date</div>
<div class="t" style="left:395px;top:171.6px;font-size:12.1px;font-weight:700;color:#e9eef1;">Campaign Type</div>
<div class="t" style="left:524px;top:171.6px;font-size:12.1px;font-weight:700;color:#e9eef1;">Budget</div>
<div class="t" style="left:592px;top:171.6px;font-size:12.1px;font-weight:700;color:#e9eef1;">Revenue</div>
<div class="t" style="left:669.5px;top:171.6px;font-size:12.1px;font-weight:700;color:#e9eef1;">Total Users Target</div>
<div class="a" style="left:150px;top:168.5px;width:15.5px;height:14.5px;background:#ffffff;border-radius:2px"></div>
<svg class="i" style="left:154.5px;top:173.5px" width="7" height="4" viewBox="0 0 7 4"><path d="M0 0 H7 L3.5 4 Z" fill="#555"/></svg>
<div class="a" style="left:275px;top:168.5px;width:15.5px;height:14.5px;background:#dcdcdc;border-radius:2px"></div>
<svg class="i" style="left:279.5px;top:173.5px" width="7" height="4" viewBox="0 0 7 4"><path d="M0 0 H7 L3.5 4 Z" fill="#555"/></svg>
<div class="a" style="left:375.5px;top:168.5px;width:15.5px;height:14.5px;background:#dcdcdc;border-radius:2px"></div>
<svg class="i" style="left:380.0px;top:173.5px" width="7" height="4" viewBox="0 0 7 4"><path d="M0 0 H7 L3.5 4 Z" fill="#555"/></svg>
<div class="a" style="left:504px;top:168.5px;width:15.5px;height:14.5px;background:#dcdcdc;border-radius:2px"></div>
<svg class="i" style="left:508.5px;top:173.5px" width="7" height="4" viewBox="0 0 7 4"><path d="M0 0 H7 L3.5 4 Z" fill="#555"/></svg>
<div class="a" style="left:572px;top:168.5px;width:15.5px;height:14.5px;background:#dcdcdc;border-radius:2px"></div>
<svg class="i" style="left:576.5px;top:173.5px" width="7" height="4" viewBox="0 0 7 4"><path d="M0 0 H7 L3.5 4 Z" fill="#555"/></svg>
<div class="a" style="left:650px;top:168.5px;width:15.5px;height:14.5px;background:#dcdcdc;border-radius:2px"></div>
<svg class="i" style="left:654.5px;top:173.5px" width="7" height="4" viewBox="0 0 7 4"><path d="M0 0 H7 L3.5 4 Z" fill="#555"/></svg>
<div class="a" style="left:746.3px;top:140px;width:277.70000000000005px;height:560px;background:#f3f3f3;"></div>
<div class="a" style="left:37.5px;top:165px;width:708.8px;height:1.6px;background:#1e7b45;"></div>
<div class="a" style="left:37px;top:165px;width:2.2px;height:256.0px;background:#1e7b45;"></div>
<div class="a" style="left:37.5px;top:419.3px;width:708.8px;height:1.8px;background:#1e7b45;"></div>
<div class="a" style="left:18.5px;top:145.5px;width:17.5px;height:18px;background:#ffffff;border-radius:3px;border:0.8px solid #e2e2e2"></div>
<svg class="i" style="left:23.5px;top:151px" width="8" height="8" viewBox="0 0 8 8"><path d="M8 0 V8 H0 Z" fill="#555"/></svg>
<svg class="i" style="left:14px;top:154px" width="5" height="5" viewBox="0 0 5 5"><path d="M5 0 V5 H0 Z" fill="#555"/></svg>
<div class="a" style="left:33px;top:160px;width:11px;height:11px;border-radius:50%;background:#1e7b45;border:1.2px solid #fff"></div>
<div class="a" style="left:0px;top:661px;width:746.3px;height:51px;background:#f3f3f3;"></div>
<div class="a" style="left:34px;top:661px;width:77px;height:28px;background:#ffffff;box-shadow:0 1px 1px rgba(0,0,0,0.08)"></div>
<div class="t" style="left:53.5px;top:669.5px;font-size:12px;font-weight:400;color:#2f7d50;-webkit-text-stroke:0.3px #2f7d50">Sheet1</div>
<svg class="i" style="left:125.5px;top:669px" width="13" height="12" viewBox="0 0 13 12"><path d="M6.5 0.5 V11.5 M0.5 6 H12.5" stroke="#555" stroke-width="1.3"/></svg>
<div class="a" style="left:152px;top:662px;width:1px;height:26px;background:#dedede;"></div>
<div class="a" style="left:634.5px;top:666.5px;width:99px;height:21px;background:#f7f7f7;border-radius:11px;border:1px solid #e6e6e6"></div>
<div class="t" style="left:644px;top:671px;font-size:12.5px;color:#555">Sum :<span style="color:#444;-webkit-text-stroke:0.35px #444">782532</span></div>
<div class="a" style="left:375.5px;top:700px;width:272.5px;height:5px;background:#111;border-radius:3px"></div>
<div class="a" style="left:746.3px;top:102px;width:277.70000000000005px;height:610px;background:#f4f4f4;"></div>
<svg class="i" style="left:765.9px;top:117px" width="15" height="15" viewBox="0 0 15 15"><path d="M0.3 5.2 L1 1.6 L3 0.1 L10 0.1 L12.3 3 L12.2 5.2 Z" fill="#4fa5cf"/><path d="M0 5 H6.2 V7.7 H0 Z" fill="#3f9160"/><path d="M9 5 H14.6 V7.9 H9 Z" fill="#a9a9a9"/><path d="M0 7.6 L14.6 7.8 L14.2 12 L12.6 14.7 L5 14.9 L3.3 11.2 L0.4 10.2 Z" fill="#ec8466"/><path d="M3 5.8 L10 1.2" stroke="#1f5f86" stroke-width="1.1"/><path d="M5.8 10.9 L8.4 6" stroke="#fff" stroke-width="1.4"/></svg>
<div class="t" style="left:790.5px;top:116.5px;font-size:15.5px;font-weight:400;color:#2e2e2e;-webkit-text-stroke:0.45px #2e2e2e">Copilot (Preview)</div>
<svg class="i" style="left:984px;top:116px" width="17.5" height="17.5" viewBox="0 0 17.5 17.5"><circle cx="8.75" cy="8.75" r="7.9" fill="none" stroke="#555" stroke-width="1.3"/><path d="M6 6 L11.5 11.5 M11.5 6 L6 11.5" stroke="#555" stroke-width="1.3" stroke-linecap="round"/></svg>
<div class="a" style="left:761.5px;top:155px;width:248.5px;height:285px;background:#ffffff;border-radius:8px;box-shadow:0 0 0 0.6px #e3e3e3"></div>
<div class="t" style="left:775.5px;top:168px;font-size:12.5px;font-weight:400;color:#3a3a3a;">Select an option to learn how I can</div>
<div class="t" style="left:775.5px;top:185.5px;font-size:12.5px;font-weight:400;color:#3a3a3a;">work with your data in Excel tables:</div>
<div class="a" style="left:775.5px;top:206.5px;width:221px;height:49.5px;background:#ffffff;border-radius:7px;border:1px solid #e0e0e0"></div>
<div class="t" style="left:824px;top:224.5px;font-size:14.7px;font-weight:400;color:#3a3a3a;">Add formula columns</div>
<div class="a" style="left:775.5px;top:264px;width:221px;height:49.5px;background:#ffffff;border-radius:7px;border:1px solid #e0e0e0"></div>
<div class="t" style="left:824px;top:282px;font-size:14.7px;font-weight:400;color:#3a3a3a;">Highlight</div>
<div class="a" style="left:775.5px;top:321.5px;width:221px;height:49.5px;background:#ffffff;border-radius:7px;border:1px solid #e0e0e0"></div>
<div class="t" style="left:824px;top:339.5px;font-size:14.7px;font-weight:400;color:#3a3a3a;">Sort and filter</div>
<div class="a" style="left:775.5px;top:379px;width:221px;height:49.5px;background:#ffffff;border-radius:7px;border:1px solid #e0e0e0"></div>
<div class="t" style="left:824px;top:397px;font-size:14.7px;font-weight:400;color:#3a3a3a;">Analyze</div>
<svg class="i" style="left:796.5px;top:224.5px" width="14.5" height="14.5" viewBox="0 0 14.5 14.5"><circle cx="7.25" cy="7.25" r="6.5" fill="none" stroke="#555" stroke-width="1.2"/><path d="M7.25 4 V10.5 M4 7.25 H10.5" stroke="#555" stroke-width="1.2"/></svg>
<svg class="i" style="left:797px;top:281.5px" width="14" height="15" viewBox="0 0 14 15"><path d="M1.5 13.5 L2.2 9.8 L9.8 2.2 A1.6 1.6 0 0 1 12.3 4.7 L4.7 12.3 Z" fill="none" stroke="#555" stroke-width="1.2" stroke-linejoin="round"/></svg>
<svg class="i" style="left:797.5px;top:341px" width="12" height="9" viewBox="0 0 12 9"><path d="M0.6 1 H11.4 M2.6 4.5 H9.4 M4.6 8 H7.4" stroke="#555" stroke-width="1.2" stroke-linecap="round"/></svg>
<svg class="i" style="left:798px;top:396px" width="11" height="15" viewBox="0 0 11 15"><path d="M3.5 10 C3.5 8.5 1 7.5 1 5 A4.5 4.5 0 0 1 10 5 C10 7.5 7.5 8.5 7.5 10 Z" fill="none" stroke="#555" stroke-width="1.2" stroke-linejoin="round"/><path d="M3.8 12.3 H7.2" stroke="#555" stroke-width="1.2" stroke-linecap="round"/></svg>
<div class="a" style="left:908.5px;top:471.5px;width:101.5px;height:38.5px;background:#cee9d8;border-radius:8px"></div>
<div class="t" style="left:918.8px;top:486px;font-size:11.8px;font-weight:400;color:#454545;-webkit-text-stroke:0.2px #454545">Try an example</div>
<svg class="i" style="left:848.5px;top:525.5px" width="15" height="15" viewBox="0 0 15 15"><path d="M7.5 1 A6.5 6.5 0 1 1 3.5 12.6 L1.2 13.8 L1.9 11.3 A6.5 6.5 0 0 1 7.5 1 Z" fill="none" stroke="#555" stroke-width="1.1" stroke-linejoin="round"/><path d="M7.5 4.5 V10.5 M4.5 7.5 H10.5" stroke="#555" stroke-width="1.1"/></svg>
<div class="t" style="left:869px;top:529px;font-size:10.3px;font-weight:400;color:#555;">Change topic</div>
<div class="a" style="left:761px;top:577.5px;width:35px;height:35px;background:#f7f7f7;border-radius:50%;border:1.3px solid #c2e3cd"></div>
<svg class="i" style="left:773.3px;top:590.3px" width="11" height="11" viewBox="0 0 11 11"><path d="M9.6 5.6 A4.2 4.2 0 1 1 8 2.1" fill="none" stroke="#555" stroke-width="1.3" stroke-linecap="round"/><path d="M8.6 0.4 L8.6 2.8 L6.2 2.8" fill="none" stroke="#555" stroke-width="1.3" stroke-linecap="round" stroke-linejoin="round"/></svg>
<div class="a" style="left:802.5px;top:577.5px;width:121.5px;height:35px;background:#f7f7f7;border-radius:8px;border:1.3px solid #c2e3cd"></div>
<div class="t" style="left:810.5px;top:589px;font-size:12.5px;font-weight:400;color:#333;">Show data insights</div>
<div class="a" style="left:931px;top:577.5px;width:83px;height:35px;overflow:hidden"><div style="position:absolute;left:0;top:0;width:120px;height:35px;border-radius:8px;border:1.3px solid #c2e3cd;background:#f7f7f7"></div><div class="t" style="left:8px;top:11.5px;font-size:12.5px;color:#333">Show a suggestion</div></div>
<div class="a" style="left:761px;top:633.5px;width:249px;height:43px;background:#ffffff;border-radius:9px;border:1px solid #dcdcdc"></div>
<svg class="i" style="left:779.5px;top:648px" width="14" height="13" viewBox="0 0 14 13"><path d="M4.6 0.9 L8.3 4.8 L4.6 8.7 L0.9 4.8 Z" fill="none" stroke="#2f7d50" stroke-width="1.4" stroke-linejoin="round"/><path d="M10.6 7.8 L12.6 9.9 L10.6 12 L8.6 9.9 Z" fill="none" stroke="#2f7d50" stroke-width="1.3" stroke-linejoin="round"/></svg>
<div class="t" style="left:804.5px;top:651.5px;font-size:12.3px;font-weight:400;color:#777;">Ask a question</div>
</body></html>
